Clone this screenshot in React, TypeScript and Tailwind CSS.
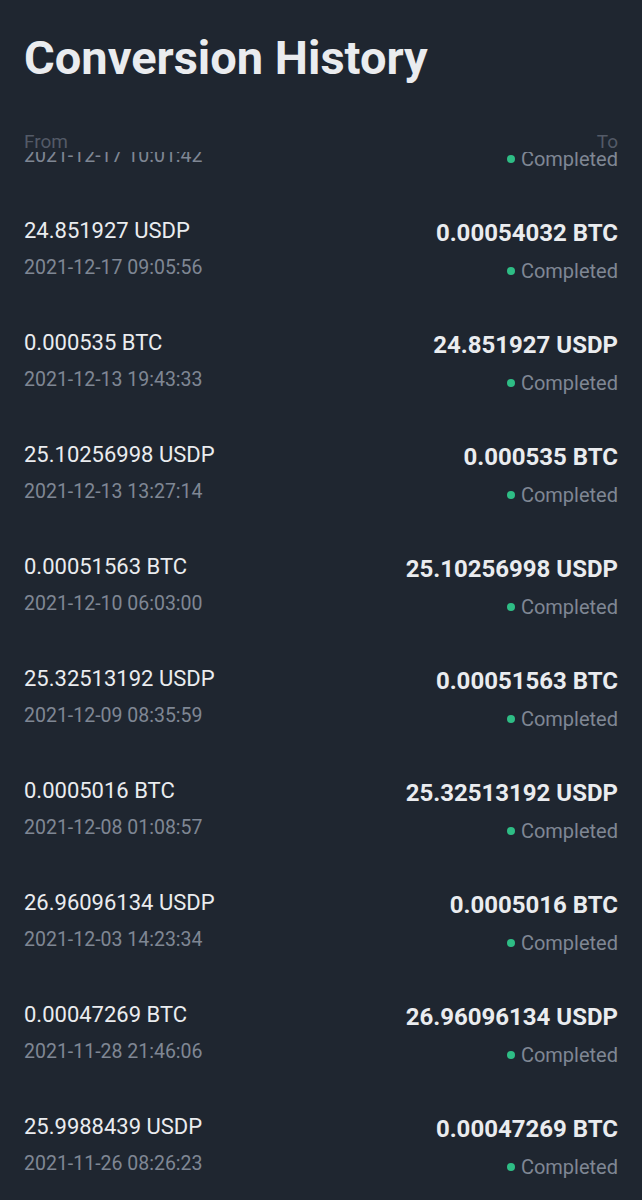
import React from "react";

type Conversion = {
  from: string;
  date: string;
  to: string;
};

// newest first; the first row is half scrolled under the header
const conversions: Conversion[] = [
  { from: "0.00054032 BTC", date: "2021-12-17 10:01:42", to: "24.851927 USDP" },
  { from: "24.851927 USDP", date: "2021-12-17 09:05:56", to: "0.00054032 BTC" },
  { from: "0.000535 BTC", date: "2021-12-13 19:43:33", to: "24.851927 USDP" },
  { from: "25.10256998 USDP", date: "2021-12-13 13:27:14", to: "0.000535 BTC" },
  { from: "0.00051563 BTC", date: "2021-12-10 06:03:00", to: "25.10256998 USDP" },
  { from: "25.32513192 USDP", date: "2021-12-09 08:35:59", to: "0.00051563 BTC" },
  { from: "0.0005016 BTC", date: "2021-12-08 01:08:57", to: "25.32513192 USDP" },
  { from: "26.96096134 USDP", date: "2021-12-03 14:23:34", to: "0.0005016 BTC" },
  { from: "0.00047269 BTC", date: "2021-11-28 21:46:06", to: "26.96096134 USDP" },
  { from: "25.9988439 USDP", date: "2021-11-26 08:26:23", to: "0.00047269 BTC" },
];

function ConversionRow({ item, first }: { item: Conversion; first?: boolean }) {
  return (
    <div className={`flex h-[112px] justify-between px-6 pt-5 ${first ? "-mt-[67px]" : ""}`}>
      <div className="flex flex-col gap-[10px]">
        <span className="text-[22px] leading-[28px] text-[#eaecef]">{item.from}</span>
        <span className="text-[19.5px] leading-[26px] text-[#7f8794]">{item.date}</span>
      </div>
      <div className="flex flex-col items-end gap-[9px]">
        <span className="text-[24px] leading-[32px] font-bold text-[#eaecef]">{item.to}</span>
        <span className="flex items-center gap-[6px] text-[20px] leading-[26px] text-[#7f8794]">
          <span className="h-[8px] w-[8px] rounded-full bg-[#2ebd85]"></span>
          Completed
        </span>
      </div>
    </div>
  );
}

export default function App() {
  return (
    <div className="flex h-[1200px] w-[642px] flex-col overflow-hidden bg-[#1f2630] font-['Roboto',sans-serif]">
      <h1 className="px-6 pt-[30px] text-[47px] leading-[56px] font-bold text-[#eaecef]">
        Conversion History
      </h1>
      <div className="mt-[46px] flex h-5 items-center justify-between px-6 text-[19px] leading-5 text-[#535a67]">
        <span>From</span>
        <span>To</span>
      </div>
      <div className="flex-1 overflow-hidden">
        {conversions.map((c, i) => (
          <ConversionRow key={c.date} item={c} first={i === 0} />
        ))}
      </div>
    </div>
  );
}
